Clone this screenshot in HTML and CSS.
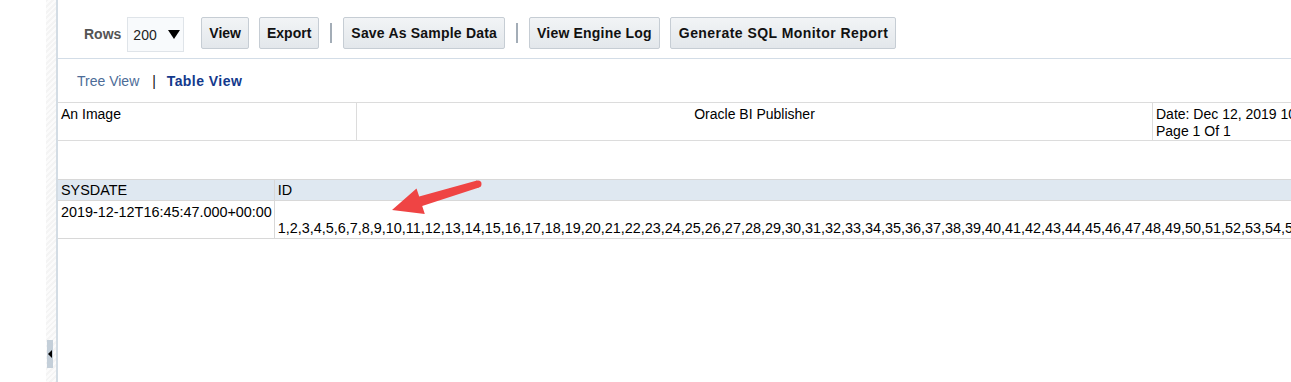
FILE: index.html
```html
<!DOCTYPE html>
<html lang="en">

<head>
    <meta charset="UTF-8">
    <title>Data Model - View Data</title>
    <link rel="stylesheet" href="styles.css">
</head>

<body>

    <div class="page">
        <div class="gutter"></div>

        <div class="splitter">
            <div class="collapse-handle">
                <svg width="4" height="8" viewBox="0 0 4 8"><polygon points="4,0 4,8 0,4" fill="#000"/></svg>
            </div>
        </div>

        <div class="main">
            <div class="toolbar">
                <span class="rows-label">Rows</span>
                <div class="rows-select">
                    <span>200</span>
                    <svg width="12" height="9" viewBox="0 0 12 9"><polygon points="0,0 12,0 6,9" fill="#000"/></svg>
                </div>
                <button class="btn">View</button>
                <button class="btn">Export</button>
                <span class="sep"></span>
                <button class="btn btn-wide">Save As Sample Data</button>
                <span class="sep"></span>
                <button class="btn btn-wide">View Engine Log</button>
                <button class="btn btn-wide btn-last">Generate SQL Monitor Report</button>
            </div>

            <div class="tabs">
                <a class="tab">Tree View</a>
                <span class="tab-sep">|</span>
                <a class="tab active">Table View</a>
            </div>

            <table class="report-head">
                <tr>
                    <td class="c1">An Image</td>
                    <td class="c2">Oracle BI Publisher</td>
                    <td class="c3">Date: Dec 12, 2019 10:15 AM<br>Page 1 Of 1</td>
                </tr>
            </table>

            <table class="data">
                <tr class="head-row">
                    <th class="col-date">SYSDATE</th>
                    <th>ID</th>
                </tr>
                <tr>
                    <td class="col-date">2019-12-12T16:45:47.000+00:00</td>
                    <td class="ids"><br><span id="idList"></span></td>
                </tr>
            </table>

            <svg class="callout" width="110" height="50" viewBox="380 175 110 50">
                <polygon points="392,210 416.5,188.5 419.2,196.6 477,180.6 479,187.4 422.2,206 424.8,214" fill="#ef4444"/>
                <circle cx="478" cy="184" r="3.5" fill="#ef4444"/>
            </svg>
        </div>
    </div>

    <script>
        const ids = [];
        for (let i = 1; i <= 70; i++) {
            ids.push(i);
        }
        document.getElementById('idList').textContent = ids.join(',');
    </script>

</body>

</html>
```

FILE: styles.css
```css
body {
    margin: 0;
    padding: 0;
    font-family: "Liberation Sans", Arial, sans-serif;
    font-size: 14px;
    color: #000;
    background-color: #fff;
    overflow: hidden;
}

.page {
    display: flex;
    height: 100vh;
}

.gutter {
    width: 46px;
    flex-shrink: 0;
}

.splitter {
    position: relative;
    width: 10px;
    flex-shrink: 0;
    border-right: 2px solid #d3dce4;
    background: repeating-linear-gradient(135deg, #f4f4f4 0 2px, #fbfbfb 2px 4px);
}

.collapse-handle {
    position: absolute;
    left: 1px;
    top: 340px;
    width: 6px;
    height: 28px;
    background-color: #c4cfd9;
    display: flex;
    align-items: center;
    justify-content: center;
}

.main {
    position: relative;
    flex: 1;
    overflow: hidden;
}

.toolbar {
    display: flex;
    align-items: flex-start;
    padding: 17px 0 0 26px;
    height: 41px;
    border-bottom: 1px solid #d3dde7;
}

.rows-label {
    font-weight: bold;
    color: #545454;
    margin-top: 9px;
    margin-right: 6px;
}

.rows-select {
    display: flex;
    align-items: center;
    justify-content: space-between;
    box-sizing: border-box;
    width: 57px;
    height: 35px;
    padding: 0 3px 0 5px;
    border: 1px solid #dfe4e9;
    background-color: #f8fafc;
    color: #222;
    margin-right: 17px;
}

.btn {
    box-sizing: border-box;
    height: 32px;
    padding: 0 7px;
    margin-right: 10px;
    font-family: "Liberation Sans", Arial, sans-serif;
    font-size: 14px;
    font-weight: bold;
    color: #111;
    background: linear-gradient(#f2f4f6, #e3e7eb);
    border: 1px solid #c6cdd4;
    border-radius: 2px;
}

.btn-wide {
    letter-spacing: 0.2px;
}

.btn-last {
    letter-spacing: 0.45px;
    padding: 0 7px 0 8px;
}

.sep {
    width: 2px;
    height: 20px;
    margin: 6px 11px 0 1px;
    background-color: #a3adb7;
}

.tabs {
    padding: 14px 0 0 19px;
    height: 16px;
    line-height: 16px;
    margin-bottom: 13px;
}

.tab {
    color: #4d6c98;
}

.tab.active {
    color: #13398c;
    font-weight: bold;
    letter-spacing: 0.45px;
}

.tab-sep {
    color: #111;
    margin: 0 7px 0 9px;
}

.report-head {
    border-collapse: collapse;
    table-layout: fixed;
    width: 1400px;
}

.report-head td {
    border: 1px solid #dcdcdc;
    padding: 3px 3px 0 3px;
    height: 34px;
    line-height: 17px;
    vertical-align: top;
    white-space: nowrap;
    overflow: hidden;
}

.report-head .c1 {
    width: 292px;
    border-left: none;
}

.report-head .c2 {
    width: 789px;
    text-align: center;
}

.data {
    margin-top: 38px;
    border-collapse: collapse;
    font-size: 14.4px;
    line-height: 16px;
    min-width: 100%;
}

.data th,
.data td {
    border: 1px solid #d8d8d8;
    padding: 2px 2px 2px 3px;
    text-align: left;
    font-weight: normal;
    vertical-align: top;
    white-space: nowrap;
}

.data .col-date {
    width: 210px;
    border-left: none;
}

.head-row {
    background-color: #dfe8f1;
}

.data td {
    padding-top: 3px;
    padding-bottom: 2px;
}

.ids {
    padding-left: 1px;
}

.callout {
    position: absolute;
    left: 322px;
    top: 175px;
}
```
